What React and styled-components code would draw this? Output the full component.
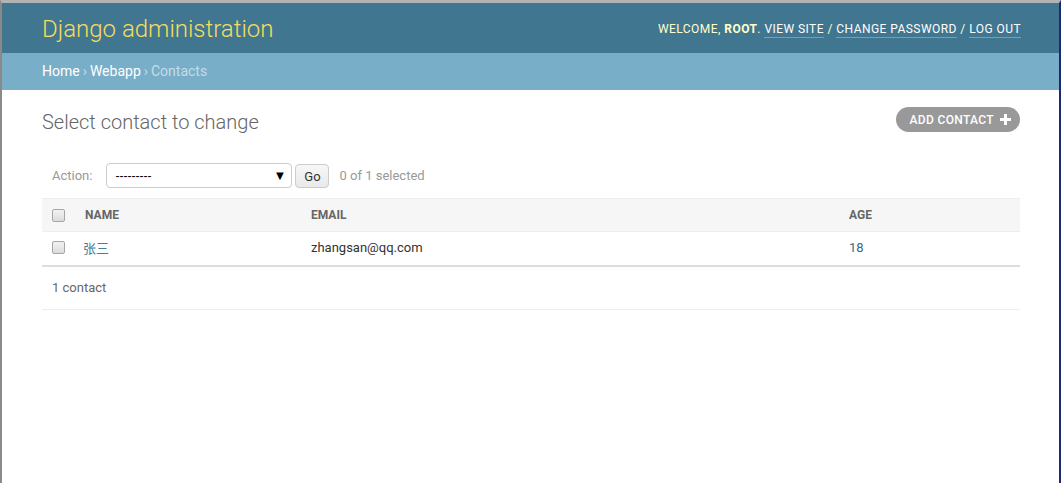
import React from "react";
import styled, { createGlobalStyle } from "styled-components";

const Global = createGlobalStyle`
  html, body { margin: 0; padding: 0; background: #fff; }
  body { font-family: Roboto, "Noto Sans CJK SC", "Liberation Sans", sans-serif; font-size: 14px; color: #333; }
  * { box-sizing: border-box; }
`;

const Frame = styled.div`
  width: 1061px;
  height: 483px;
  border-top: 3px solid #b3b3b3;
  border-left: 2px solid #8a8a8a;
  border-right: 2px solid #1d2a6e;
  display: flex;
  flex-direction: column;
  overflow: hidden;
`;

const Header = styled.header`
  height: 50px;
  background: #417690;
  padding: 0 38px 0 40px;
  display: flex;
  align-items: center;
  justify-content: space-between;
`;

const Branding = styled.h1`
  margin: 2px 0 0;
  font-size: 24px;
  font-weight: 300;
  color: #f5dd5d;
  line-height: 28px;
`;

const UserTools = styled.div`
  font-size: 12px;
  font-weight: 400;
  letter-spacing: 0.45px;
  text-transform: uppercase;
  color: #ffc;
  line-height: 14px;
  padding-top: 2px;
  strong { font-weight: 700; }
`;

const ToolLink = styled.a`
  color: #fff;
  text-decoration: none;
  border-bottom: 1px solid rgba(255, 255, 255, 0.3);
  padding-bottom: 1px;
`;

const Breadcrumbs = styled.div`
  height: 37px;
  background: #79aec8;
  padding: 0 40px 2px;
  display: flex;
  align-items: center;
  font-size: 14px;
  color: #c4dce8;
`;

const Crumb = styled.a`
  color: #fff;
  text-decoration: none;
`;

const Sep = styled.span`
  margin: 0 3px;
  color: #c4dce8;
`;

const Content = styled.main`
  padding: 20px 39px 0 40px;
`;

const TitleRow = styled.div`
  display: flex;
  justify-content: space-between;
  align-items: flex-start;
`;

const Title = styled.h1`
  margin: 0 0 19px;
  font-size: 20px;
  font-weight: 300;
  line-height: 24px;
  color: #666;
`;

const AddButton = styled.a`
  margin-top: -3px;
  height: 25px;
  display: flex;
  align-items: center;
  gap: 6px;
  padding: 0 9px 0 13px;
  background: #999;
  border-radius: 13px;
  color: #fff;
  font-size: 12px;
  font-weight: 500;
  text-transform: uppercase;
  letter-spacing: 0.35px;
`;

const ActionBar = styled.div`
  padding: 10px;
  display: flex;
  align-items: center;
  font-size: 13px;
  color: #999;
  height: 45px;
`;

const ActionLabel = styled.span`
  margin-right: 14px;
`;

const Select = styled.div`
  width: 186px;
  height: 25px;
  border: 1px solid #ccc;
  border-radius: 4px;
  display: flex;
  align-items: center;
  justify-content: space-between;
  padding: 0 5px 0 8px;
  color: #000;
  font-family: "Liberation Sans", Arial, sans-serif;
  font-size: 12px;
  background: #fff;
`;

const Arrow = styled.span`
  font-size: 13px;
`;

const GoButton = styled.button`
  margin-left: 3px;
  width: 34px;
  height: 24px;
  border: 1px solid #ccc;
  border-radius: 4px;
  background: linear-gradient(#f7f7f7, #e9e9e9);
  font-family: Roboto, sans-serif;
  font-size: 13px;
  color: #333;
  padding: 0;
  margin-top: 1px;
`;

const Counter = styled.span`
  margin-left: 10px;
  margin-top: -1px;
`;

const Row = styled.div`
  display: grid;
  grid-template-columns: 33px 226px 538px 1fr;
  align-items: center;
  height: ${(p) => p.$h}px;
  padding-bottom: ${(p) => p.$pb || 0}px;
  background: ${(p) => (p.$head ? "#f6f6f6" : "#fff")};
  border-top: ${(p) => (p.$head ? "1px solid #eee" : "none")};
  border-bottom: ${(p) => p.$border};
`;

const Cell = styled.div`
  padding-left: ${(p) => p.$pl ?? 10}px;
  font-size: ${(p) => (p.$head ? "12px" : "13px")};
  font-weight: ${(p) => (p.$head ? 700 : 400)};
  text-transform: ${(p) => (p.$head ? "uppercase" : "none")};
  color: ${(p) => p.$color || "#333"};
  display: flex;
  align-items: center;
`;

const Check = styled.span`
  width: 13px;
  height: 13px;
  border: 1px solid #a6a6a6;
  border-radius: 2px;
  background: linear-gradient(#f2f2f2, #dcdcdc);
  display: inline-block;
`;

const Paginator = styled.div`
  height: 43px;
  padding: 0 10px 1px;
  display: flex;
  align-items: center;
  font-size: 13px;
  color: #666;
  border-bottom: 1px solid #eee;
`;

export default function App() {
  return (
    <>
      <Global />
      <Frame>
        <Header>
          <Branding>Django administration</Branding>
          <UserTools>
            Welcome, <strong>root</strong>. <ToolLink>View site</ToolLink> /{" "}
            <ToolLink>Change password</ToolLink> / <ToolLink>Log out</ToolLink>
          </UserTools>
        </Header>
        <Breadcrumbs>
          <Crumb>Home</Crumb>
          <Sep>›</Sep>
          <Crumb>Webapp</Crumb>
          <Sep>›</Sep>
          Contacts
        </Breadcrumbs>
        <Content>
          <TitleRow>
            <Title>Select contact to change</Title>
            <AddButton>
              Add contact
              <svg width="11" height="11" viewBox="0 0 11 11">
                <path d="M4 0h3v4h4v3H7v4H4V7H0V4h4z" fill="#fff" />
              </svg>
            </AddButton>
          </TitleRow>
          <ActionBar>
            <ActionLabel>Action:</ActionLabel>
            <Select>
              <span>---------</span>
              <Arrow>▼</Arrow>
            </Select>
            <GoButton>Go</GoButton>
            <Counter>0 of 1 selected</Counter>
          </ActionBar>
          <Row $head $h={34} $border="1px solid #eee">
            <Cell><Check /></Cell>
            <Cell $head $color="#666">Name</Cell>
            <Cell $head $color="#666">Email</Cell>
            <Cell $head $color="#666">Age</Cell>
          </Row>
          <Row $h={35} $pb={3} $border="2px solid #ddd">
            <Cell><Check /></Cell>
            <Cell $pl={8} $color="#447e9b">张三</Cell>
            <Cell>zhangsan@qq.com</Cell>
            <Cell $color="#3d6680">18</Cell>
          </Row>
          <Paginator>1 contact</Paginator>
        </Content>
      </Frame>
    </>
  );
}
